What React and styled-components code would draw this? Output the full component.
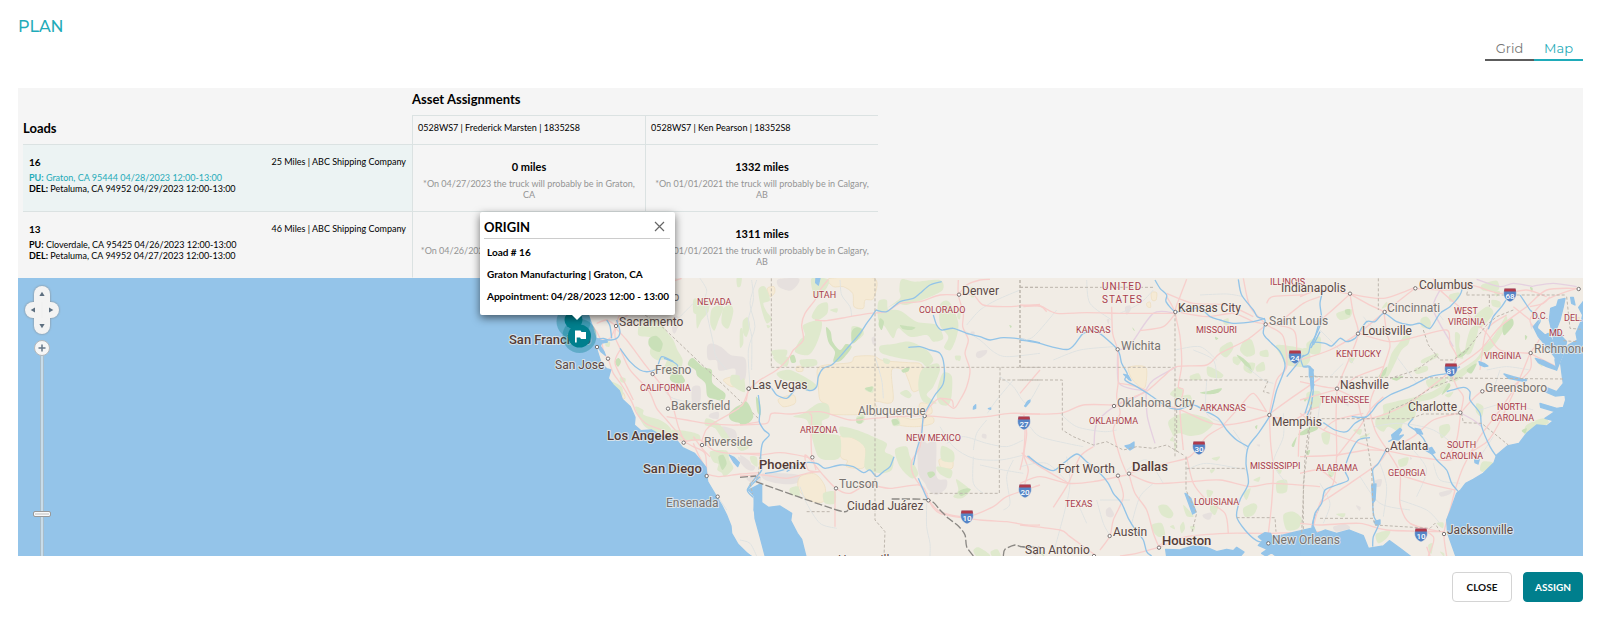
import React, { useState } from 'react';
import styled, { createGlobalStyle } from 'styled-components';

const color = {
  accent: '#1fabb9',
  teal: '#007f8d',
  panel: '#f5f5f5',
  line: '#dbe2e2',
  muted: '#949494',
  sea: '#94c4e9',
  land: '#f1ece5',
};

const GlobalStyle = createGlobalStyle`
  *, *::before, *::after { box-sizing: border-box; }
  body { margin: 0; background: #fff; color: #000; font-family: Lato, "Liberation Sans", sans-serif; }
  button { font-family: inherit; cursor: pointer; }
`;

const Page = styled.main`
  padding: 17px 17px 0 18px;
`;

const Title = styled.h1`
  margin: 0;
  font: 500 16px/20px Montserrat, Inter, sans-serif;
  color: ${color.accent};
`;

const Tabs = styled.div`
  display: flex;
  justify-content: flex-end;
`;

const Tab = styled.button`
  width: 49px;
  height: 24px;
  padding: 0;
  border: 0;
  border-bottom: 2px solid ${(p) => (p.$active ? color.accent : '#5c5c5c')};
  background: none;
  font: 400 13px/20px Montserrat, Inter, sans-serif;
  color: ${(p) => (p.$active ? color.accent : '#777')};
`;

const Panel = styled.section`
  margin-top: 27px;
  background: ${color.panel};
`;

const PlanTable = styled.table`
  margin-left: 5px;
  border-collapse: separate;
  border-spacing: 0;
  table-layout: fixed;
  width: 855px;
`;

const Col = styled.col`
  width: ${(p) => p.$width}px;
`;

const Heading = styled.th`
  height: ${(p) => (p.$tall ? 29 : 28)}px;
  padding: 0 0 ${(p) => (p.$tall ? 4 : 6)}px;
  text-align: left;
  font-size: 13px;
  line-height: 16px;
  font-weight: 700;
  border-bottom: ${(p) => (p.$ruled ? `1px solid ${color.line}` : '0')};
`;

const AssetHead = styled.th`
  padding: 0 5px 4px;
  border: 1px solid ${color.line};
  border-top: 0;
  border-right: 0;
  text-align: left;
  font-size: 9px;
  line-height: 12px;
  font-weight: 400;
`;

const LoadCell = styled.td`
  height: 67px;
  padding: 11px 6px 0;
  vertical-align: top;
  background: ${(p) => (p.$selected ? '#ecf3f3' : 'transparent')};
  border-bottom: 1px solid ${color.line};
  tr:last-child > & { height: 66px; border-bottom-color: transparent; }
`;

const LoadTop = styled.div`
  display: flex;
  justify-content: space-between;
  height: 16px;
  font-size: 9px;
  line-height: 12px;
`;

const LoadNumber = styled.strong`
  font-size: 10px;
`;

const Stop = styled.div`
  font-size: 9px;
  line-height: 11px;
  color: ${(p) => (p.$active ? color.accent : 'inherit')};
`;

const AssetCell = styled.td`
  padding: 15px 6px 0;
  vertical-align: top;
  text-align: center;
  border-left: 1px solid ${color.line};
  border-bottom: 1px solid ${color.line};
  tr:last-child > & { border-bottom-color: transparent; }
`;

const Miles = styled.div`
  margin-bottom: 4px;
  font-size: 11px;
  line-height: 14px;
  font-weight: 700;
`;

const Note = styled.div`
  font-size: 9px;
  line-height: 11px;
  color: ${color.muted};
`;

const MapArea = styled.div`
  position: relative;
  height: 278px;
  background: ${color.land};
`;

const MapSvg = styled.svg`
  display: block;
  width: 100%;
  height: 100%;
`;

const MapLabel = styled.text`
  font-family: Roboto, sans-serif;
  font-size: ${(p) => p.$size}px;
  font-weight: ${(p) => p.$weight};
  fill: ${(p) => p.$fill};
  stroke: #f6f1ea;
  stroke-width: 2px;
  stroke-opacity: 0.7;
  paint-order: stroke;
  stroke-linejoin: round;
  letter-spacing: ${(p) => (p.$tracked ? '1px' : 'normal')};
`;

const Controls = styled.div`
  position: absolute;
  top: 8px;
  left: 7px;
  width: 34px;
  height: 270px;
  display: flex;
  flex-direction: column;
  align-items: center;
`;

const PanPad = styled.div`
  display: grid;
  grid-template: repeat(3, 16px) / 9px 16px 9px;
  width: 34px;
  filter: drop-shadow(0 0 1px #888);
`;

const PanButton = styled.button`
  grid-area: ${(p) => p.$area};
  width: 16px;
  height: 16px;
  justify-self: ${(p) => p.$side || 'center'};
  padding: 0;
  border: 0;
  border-radius: ${(p) => p.$radius};
  background: #f3f3f3;
  display: grid;
  place-items: center;
`;

const PanHub = styled.span`
  grid-area: 2 / 2 / 3 / 3;
  background: #f1f1f1;
`;

const ZoomButton = styled.button`
  width: 16px;
  height: 16px;
  flex: none;
  margin-top: 6px;
  padding: 0;
  border: 1px solid #b5b8ba;
  border-radius: 50%;
  background: #f6f6f6;
  display: grid;
  place-items: center;
`;

const ZoomSlider = styled.input`
  appearance: none;
  writing-mode: vertical-lr;
  direction: rtl;
  flex: 1;
  width: 18px;
  min-height: 0;
  margin: 0;
  background: linear-gradient(90deg, transparent 7px, #a9bdca 7px, #a9bdca 8px, #c8dce9 8px, #c8dce9 10px, #a9bdca 10px, #a9bdca 11px, transparent 11px);
  &::-webkit-slider-thumb {
    appearance: none;
    width: 18px;
    height: 6px;
    border: 1px solid #999;
    border-radius: 2px;
    background: #dcdcdc;
    box-shadow: inset 0 0 0 1px #fafafa;
  }
`;

const Anchor = styled.div`
  position: absolute;
  left: 558px;
  top: 45px;
`;

const Popup = styled.div`
  position: absolute;
  z-index: 2;
  left: -96px;
  bottom: 8px;
  width: 195px;
  height: 103px;
  padding: 5px 5px 0 4px;
  border-radius: 2px;
  background: #fff;
  box-shadow: 0 3px 8px rgba(0, 0, 0, 0.55);
  &::after {
    content: '';
    position: absolute;
    left: 92px;
    top: 103px;
    border: 5px solid transparent;
    border-top-color: #fff;
    border-bottom: 0;
  }
`;

const PopupHead = styled.header`
  display: flex;
  justify-content: space-between;
  align-items: center;
  height: 22px;
  padding: 0 5px 2px 0;
  border-bottom: 1px solid #ccc;
`;

const PopupTitle = styled.h2`
  margin: 0;
  font-size: 13px;
  line-height: 16px;
`;

const IconButton = styled.button`
  width: 12px;
  height: 12px;
  padding: 0;
  border: 0;
  background: none;
  display: grid;
  place-items: center;
`;

const PopupBody = styled.div`
  display: grid;
  gap: 10px;
  padding: 7px 3px 0;
  font-size: 10px;
  line-height: 12px;
  font-weight: 700;
  white-space: nowrap;
`;

const Footer = styled.footer`
  display: flex;
  justify-content: flex-end;
  gap: 11px;
  padding: 16px 0;
`;

const ActionButton = styled.button`
  width: 60px;
  height: 30px;
  padding: 0;
  border: 1px solid ${(p) => (p.$primary ? color.teal : '#d4d4d4')};
  border-radius: 4px;
  background: ${(p) => (p.$primary ? color.teal : '#fff')};
  color: ${(p) => (p.$primary ? '#fff' : '#111')};
  font-size: 10px;
  font-weight: 700;
`;

/* ---------- Map drawing ----------
   The map is cut into four sheets. Sheet features use three units per
   pixel, counted from the sheet's own top left corner. */
const SHEETS = [460, 740, 1020, 1300];
const SHEET_TOP = 270;

const parse = (s) => s.trim().split(/\s+/).map((p) => p.split(',').map(Number));

const straight = (s) => `M${parse(s).join('L')}`;

function curve(s, closed) {
  const p = parse(s);
  const n = p.length;
  const at = (i) => (closed ? p[(i + n) % n] : p[Math.max(0, Math.min(n - 1, i))]);
  let d = `M${p[0]}`;
  for (let i = 0; i < (closed ? n : n - 1); i += 1) {
    const [a, b, c, e] = [at(i - 1), at(i), at(i + 1), at(i + 2)];
    d += `C${b[0] + (c[0] - a[0]) / 7},${b[1] + (c[1] - a[1]) / 7} ${c[0] - (e[0] - b[0]) / 7},${c[1] - (e[1] - b[1]) / 7} ${c}`;
  }
  return closed ? `${d}Z` : d;
}

const FEATURES = [
  {
    sea: [
      'M-1400 0H372L385 135L396 165L402 188L410 210L411 240L424 280L440 296L452 300L445 325L460 345L478 362L487 388L511 410L525 442L523 465L543 482L575 480L605 497L648 508L668 533L704 550L722 572L738 592L743 635L765 672L785 705L800 735L813 768L815 790L834 823L872 860H-1400z',
      'M865 660L885 680L882 720L893 760L905 800V640z',
      'M808 555L822 562L838 578L833 590L822 578z',
      'M410 205L425 212L440 210L442 216L425 219L421 228L432 245L436 256L424 246L414 232z',
    ],
    sand: ['790,330 820,320 850,325 845,345 815,350', '465,360 490,370 495,385 480,384'],
    gray: [
      '742,228 760,221 785,232 812,255 856,266 855,328 828,322 824,296 778,302 770,272 744,268',
      '697,352 720,350 722,386 713,407 696,395', '750,432 775,426 774,447 748,442',
      '785,470 824,480 830,505 808,508 792,495', '640,140 655,140 660,155 645,190 637,180', '477,362 492,368 494,386 481,380', '835,560 865,580 885,590 878,602 858,596 840,576',
      '860,625 900,618 900,635 875,638',
    ],
    green: [
      '545,150 595,148 620,185 640,210 652,240 668,270 662,310 670,340 650,345 632,318 610,300 620,270 590,270 570,250 575,205 535,195',
      '710,115 730,92 748,95 745,125 725,150 711,175', '755,118 780,105 790,115 776,150 763,182 751,160', '790,115 812,105 820,125 805,175 785,160',
      '830,25 845,22 842,48 832,50', '848,155 862,142 870,165 860,200 850,190', '450,335 485,350 487,378 465,375',
      '525,412 550,420 552,435 600,450 628,470 635,488 610,490 555,470', '635,480 690,485 718,495 715,512 650,508',
      '740,445 775,460 800,490 812,515 790,510 765,475 735,465', '750,545 800,542 808,570 820,595 795,620 785,608 772,600 775,582 760,575',
      '815,315 850,322 855,365 832,358 812,340', '480,322 496,325 495,338 482,335', '870,560 890,562 892,590 876,580',
      '437,215 450,216 448,230 437,228', '700,90 710,88 712,130 700,126', '832,510 862,520 865,535 845,543 830,530', '555,520 560,520 560,526 554,526',
    ],
    forest: [
      '690,268 700,265 728,290 755,300 758,340 795,370 790,392 765,388 742,378 736,340 712,318 706,300 684,285',
      '808,430 840,405 865,415 880,440 860,460 815,452', '568,205 590,198 608,220 600,245 580,240 566,225', '630,320 655,305 675,330 665,340 636,335',
      '465,275 475,264 483,275 474,290', '775,560 790,555 800,580 788,600 780,585',
    ],
    roads: [
      '385,150 410,185 425,210 450,205 468,168', '468,168 465,200 480,235 510,300 565,360 590,415 620,450 650,485 680,515',
      '425,212 432,250 445,268 460,310 485,345 515,395 530,430 560,462 605,480 665,512', '468,160 510,130 550,110 600,50 665,25',
      '468,175 500,210 530,250 560,290 600,340 630,380 655,470 672,512', '672,515 700,530 735,550 740,610', '672,515 720,510 760,540 810,550 900,550',
      '725,515 738,480 760,460 850,405 866,360 900,330', '620,440 680,450 740,460 830,465 900,455', '480,240 465,280 500,350 520,390',
      '468,160 480,130 475,110', '468,168 440,150 410,160', '740,612 780,620 840,612 900,608', '700,520 718,560 740,600', '700,500 730,540 750,560',
    ],
    minor: ['720,25 740,60 735,100 760,220 768,260 800,300', '890,30 870,100 885,170 865,240 870,350', '700,100 640,160', '600,340 630,380 680,395 740,400', '800,720 780,690 745,640'],
    rivers: [
      '405,208 430,205 445,210 470,205 480,185 470,150', '480,235 510,275 540,300 565,305 590,295 605,260 640,275', '655,300 652,285 640,276 612,265', '440,150 450,168 455,205', '900,620 880,640 862,660',
    ],
    borders: ['530,120 598,162 900,450'],
  },
  {
    sea: [
      'M42 682L85 712L120 708L155 730L152 752L172 790L185 808L198 860H76L60 800L45 745z', 'M0 836L36 860H0z',
      'M228 24L240 24L235 45L227 38z', 'M701 410L707 404L707 415L700 417z', 'M745 416L752 414L752 418z',
    ],
    sand: [
      '270,25 403,25 400,85 375,90 370,115 342,110 338,70 310,50 280,50', '238,290 330,278 345,260 400,258 430,272 505,278 545,285 550,345 520,365 505,330 490,300 455,300 460,385 445,400 405,395 405,430 260,432 262,405 240,390 235,340',
      '300,500 340,505 375,530 372,592 320,590 322,572 302,560', '180,620 225,612 255,650 250,695 205,690 175,655',
      '82,55 102,50 104,68 90,80', '170,290 188,290 187,304 170,303', '475,440 520,448 575,440 578,460 530,470 478,465', '540,400 570,405 575,430 540,435', '598,568 636,570 636,595 605,595', '115,388 160,375 165,400 130,410',
    ],
    gray: [
      '535,490 560,520 588,515 590,620 620,630 618,655 590,675 565,660 555,640 535,605', '115,28 175,25 172,45 150,62 116,50', '70,610 160,612 198,625 160,642 110,640 72,628',
      '712,245 740,240 738,252 718,265 708,258', '0,270 14,275 14,318 0,328', '0,555 30,575 35,600 12,585', '727,492 739,494 738,506 726,502', '693,185 703,185 703,193 693,192', '395,205 405,200 408,225 398,222',
    ],
    green: [
      '215,25 265,28 262,50 235,85 220,70', '55,60 75,50 90,90 70,100 80,125 95,145 80,160 65,120', '235,105 262,98 262,130 235,150 215,140',
      '190,165 240,150 245,175 228,225 205,255 165,245 180,210 195,195', '95,242 140,240 135,262 105,262', '100,260 145,262 140,290 115,280',
      '485,28 525,35 600,30 608,60 560,85 500,105 470,100 440,115 480,85 478,60', '415,95 440,90 445,120 480,130 520,180 475,175 460,205 435,170 415,150',
      '440,125 480,122 530,155 590,165 610,205 580,215 560,195 510,200 470,165', '420,228 460,222 510,215 560,240 580,270 560,290 540,275 480,265 425,250',
      '600,105 622,92 640,115 655,160 650,200 632,240 612,232 625,200 600,165', '608,310 635,318 635,375 625,405 600,402 590,370', '545,300 590,280 600,300 580,350 560,375 590,400 550,395 535,350',
      '160,440 190,430 235,400 265,405 268,440 245,455 262,490 300,500 300,560 270,570 235,560 215,500 200,450', '300,470 350,480 400,500 440,520 435,545 460,560 455,600 420,610 375,595 375,535 340,505 305,500',
      '465,540 500,530 510,560 535,610 515,625 480,590', '350,440 372,430 372,455 352,460', '455,450 475,445 480,465 460,468', '605,528 640,545 640,575 605,570', '590,590 635,600 630,625 600,612',
      '648,628 668,640 690,662 665,685 640,680 655,660', '180,270 225,268 230,285 190,292', '645,258 662,258 660,272 648,270', '375,355 400,350 398,368 378,362', '150,655 175,650 178,680 152,672', '335,170 365,175 370,195 340,215',
      '690,55 700,52 702,80 693,80', '700,842 715,832 745,850 748,860 712,860', '752,845 772,838 782,860 758,860', '0,180 8,178 10,220 0,232', '80,165 92,168 84,175', '250,670 285,665 285,700 255,700', '480,370 500,360 515,375 505,385', '110,310 150,300 210,330 230,350 200,362 170,335 130,330', '655,120 662,125 660,148 652,142', '270,120 292,115 290,128', '430,265 450,270 446,282 432,278',
    ],
    forest: [
      '258,172 272,185 278,215 300,240 318,222 335,232 305,270 280,275 285,245 265,215', '335,185 350,172 368,182 352,210 336,220', '420,145 432,155 425,180 416,165', '0,410 20,395 38,430 30,455 0,462',
      '150,260 162,255 168,275 155,278', '480,165 500,168 526,172 515,180 490,178', '350,445 370,440 365,460 350,458', '562,608 580,605 585,615 570,624', '455,450 470,448 478,460 462,466', '485,300 508,290 505,304 490,308', '655,665 680,655 692,660 665,678', '375,355 398,350 392,366', '48,380 60,400 62,435 52,425', '808,165 815,168 812,174',
    ],
    roads: [
      '265,28 240,60 225,90 195,130 185,165 190,210 160,240 145,265 110,300 60,330 28,355', '225,150 260,152 330,140 390,130 440,125 480,100 540,95 600,75 655,75',
      '655,30 655,75 670,130 668,170 685,210 675,250 690,300 680,350 660,390 640,415 600,385 570,410 555,437', '655,75 700,75 730,105 800,110 900,103', '655,75 680,45 720,30 750,28',
      '0,465 80,460 95,430 150,432 240,425 330,450 400,445 470,440 555,437 650,445 740,440 810,430 900,432', '0,550 60,555 120,548 195,560 217,570', '215,560 213,500 215,440 208,430',
      '217,575 245,610 288,655 330,670 380,645 450,655 540,645 565,685', '0,618 70,615 140,625 200,610 240,605', '555,437 545,470 540,530 515,575 520,615 550,660 565,690', '565,690 600,725 680,740 760,710 800,680 900,645',
      '565,690 600,730 720,750 800,755 860,765 900,765', '850,430 860,490 852,555 865,600 852,650', '285,658 285,720 285,770', '28,355 10,400 0,410', '217,575 195,555 205,600 240,605', '220,570 228,600', '600,385 635,390 640,412', '852,555 845,548',
    ],
    minor: [
      '35,30 40,90 25,150 35,200 35,300', '300,30 305,75 330,110 335,140', '680,165 720,120 770,90 840,60', '670,180 720,210 760,245 800,260 900,250', '405,260 425,330 430,385', '600,470 640,530 700,565 780,570 852,555',
      '620,520 670,500 740,520 800,530 850,510', '700,560 700,640 730,670', '740,450 710,490 700,540', '820,330 770,390 742,430', '820,570 800,620 810,700 790,720', '180,650 200,700 240,760 290,775', '0,810 30,820 50,858', '560,700 560,770 570,820 570,858', '780,320 820,350 860,400 900,340', '720,585 790,600 850,610',
    ],
    rivers: [
      '408,120 395,140 380,160 360,190 330,225 300,260 275,285 250,295 235,320 230,350 210,362 175,350 160,365 140,385 110,375 90,350 60,350', '605,35 570,45 540,70 520,85 480,95 440,125 408,120',
      '580,135 590,165 605,180 640,175 680,190 720,200 750,210 790,203 850,208 900,218', '505,232 540,230 570,240 600,250 612,285 610,340 585,375 565,410 550,440 545,490 530,540 520,585',
      '55,375 60,420 58,455 72,480 88,495 68,518 62,560 65,600 45,625 22,660 40,682', '140,605 185,580 230,580 255,595 300,585 340,590 370,608 390,600 410,620 430,605 450,590 462,560', '75,610 110,605 160,590', '862,558 880,575 900,585', '855,408 862,395 872,390', '535,625 550,660 562,688',
    ],
    borders: ['94,25 94,292', '94,292 460,292 900,292', '405,25 405,750 435,785 432,858', '840,30 840,292', '840,52 900,52', '780,292 780,330 900,330', '778,330 778,670 562,670', '30,640 38,672', '60,560 55,620 30,640', '200,725 275,725'],
    frontier: ['0,622 48,618', '48,635 290,720 325,720', '455,687 565,690 600,720 625,745 655,768 675,795 680,830 700,858', '790,858 795,838 825,825 845,830 900,832'],
  },
  {
    sea: [
      'M437 838L480 840L520 828L560 832L590 845L620 838L640 842L650 832L672 846L660 860H440z',
      'M735 788L752 790L755 800L790 795L830 785L872 775L880 790L900 800V860H770L755 848L738 858L725 850L742 838L715 826L728 812L715 800z',
      'M315 528L328 525L342 516L342 532L330 540z', 'M495 670L512 685L528 725L518 732L506 700z', 'M14 408L28 393L30 395L17 410z', 'M311 313L324 316L333 332L326 328z', 'M868 290L880 300L876 325L868 320z',
    ],
    sand: ['327,292 377,292 377,345 365,355 335,325', '394,68 410,68 408,90 396,90', '380,100 390,96 392,112 382,110', '490,400 515,395 510,408'],
    gray: ['315,112 330,106 332,120 320,134', '258,720 270,712 282,732 275,742 260,738', '548,735 575,728 570,748 555,746', '260,150 268,148 266,162', '710,524 720,524 718,530'],
    green: [
      '602,232 632,215 640,235 620,262 600,250', '672,212 695,210 705,250 680,260 660,240', '720,245 742,240 745,260 722,258', '640,260 665,265 655,285 640,278', '675,280 705,280 695,310 672,300', '562,290 590,300 610,315 600,325 565,318', '510,318 535,310 542,328 515,330', '708,290 730,275 735,300 712,305',
      '480,380 510,375 515,400 492,412 485,400', '445,455 490,430 550,440 580,460 550,490 510,498 475,490 450,510 470,520 465,545 460,500', '610,150 625,145 625,165 612,162', '542,412 560,402 560,415', '450,372 475,350 490,365 475,385',
      '415,708 440,705 460,730 450,745 425,735', '395,765 425,760 435,795 415,800 400,785', '490,705 515,730 520,740 500,738', '560,660 580,665 565,685', '575,700 595,705 585,735 570,720', '670,715 700,700 712,710 700,735 675,740', '670,670 692,655 680,690', '770,635 800,630 800,665 772,668', '790,735 820,725 845,745 835,775 800,780', '770,225 860,240 870,270 850,290 800,285 785,260', '860,220 900,200 900,250 870,250', '860,370 900,365 900,410 870,410', '770,600 785,600 780,612', '575,565 600,560 590,572', '700,630 720,620 716,635', '570,600 585,598 575,610',
      '480,770 490,755 495,775 485,790', '450,770 460,765 465,778', '510,770 525,768 520,785',
    ],
    forest: ['650,255 670,265 690,285 695,305 675,285', '540,368 570,362 605,355 595,368 565,373', '835,492 870,470 895,465 890,480 850,495', '815,525 830,500 822,530', '337,172 345,182 340,180', '585,200 595,205 588,210', '850,385 862,385 855,395', '60,850 70,845 72,858', '855,545 870,540 865,556', '705,470 712,465 710,478'],
    roads: [
      '0,105 60,108 110,130 200,128 300,130 385,130 465,130', '500,28 480,80 466,125 480,200 485,285 475,350 490,360 480,420 490,540', '466,125 560,140 640,130 700,155 737,162', '275,110 278,190 292,238 295,330 290,380 300,430 280,480 300,560 320,610',
      '0,432 120,430 190,405 282,405', '282,408 330,385 378,365 430,320 470,290 560,285 600,250 680,210 737,165', '282,408 400,405 470,415 560,455 612,465 680,455 748,435', '610,465 660,410 700,370 740,425', '612,468 560,500 520,550 500,565 440,580 325,610',
      '320,615 220,635 145,640 60,620 0,640', '325,610 400,640 510,635 600,630 690,650 760,640 900,650', '293,618 310,680 280,750 270,797 240,840', '327,612 345,670 380,720 400,790 417,832', '0,765 120,780 150,800 225,855', '145,640 60,590 12,555',
      '12,430 15,490 10,555 0,600', '100,712 145,640 180,560 220,530', '417,832 500,800 620,790 745,790 900,785', '500,560 520,640 560,690 615,730 625,790', '748,435 752,520 760,600 755,700 745,790', '748,430 770,330 800,290 790,200 750,170 737,160 820,180 830,240 825,290',
      '748,432 820,380 900,325', '748,438 820,450 870,420 900,410', '440,80 455,105 466,128', '360,182 430,170 466,130', '700,140 620,105 520,100 440,70', '0,370 60,300', '680,410 740,425', '417,832 350,850 300,858', '737,162 690,110 670,25', '775,160 850,100 900,80', '835,560 840,480 870,430', '10,110 60,108 80,125', '295,340 330,345 378,360', '417,828 440,812 500,803', '740,100 758,80 850,75',
    ],
    minor: [
      '200,30 210,100 275,150', '0,210 40,200 110,120', '280,230 180,240 100,270', '520,240 580,270 590,330', '465,240 540,230 590,270', '120,430 170,470 250,485 290,480', '140,560 150,640 135,720 100,850', '230,690 250,760 270,797', '330,690 240,690', '400,640 360,680 335,760', '560,330 560,430 612,460', '640,480 680,540', '300,130 360,100 400,60', '30,470 60,500 140,520 190,530', '180,715 200,760', '540,75 620,72 670,80', '680,290 730,330 760,340', '500,600 560,580 680,600', '790,430 790,500 760,580 800,640', '0,590 80,580 145,640', '320,600 380,570 430,640',
    ],
    violet: ['378,360 400,330 470,290', '466,130 400,130 330,225 293,240', '293,240 295,335 330,355 378,362', '378,362 382,440 405,520', '378,362 340,385 282,410 230,460 222,530'],
    rivers: [
      '0,210 50,218 145,238 190,190 230,185 292,238 305,280 322,312 315,330 350,350 390,375 440,410 475,418 520,405 560,425 595,445 620,480 650,510 685,530', '405,30 420,55 440,75 438,95 466,125 500,118 540,115 570,140 600,150 640,160 700,155 735,145',
      '655,28 665,75 700,120 712,140 735,150 730,190 750,215 780,245 795,290 770,360 760,400 748,440 715,490 685,530 678,580 685,640 660,690 650,740 675,780 710,812 745,820', '848,290 870,290 880,330 875,400 860,440',
      '25,558 60,585 100,602 130,580 170,552 200,575 240,610 265,640 280,670 305,700 325,745 350,785 370,810 380,845 395,858', '900,150 875,230 845,262 825,290 800,320', '897,715 880,750 875,778', '500,670 525,730', '900,185 880,225',
    ],
    borders: ['0,52 405,52', '0,30 0,292 460,292', '465,130 465,560', '0,330 127,330 127,480 160,500 220,525 260,515 310,540 350,530 400,535 440,525 490,555', '463,330 745,330 730,365 750,370', '498,560 498,660 530,730 515,790', '500,595 680,595', '650,743 765,743 768,785', '875,395 865,520 850,640 850,780', '880,318 900,320', '470,420 470,545'],
    frontier: ['0,830 15,832 50,855'],
  },
  {
    sea: [
      'M852 92L836 112L848 135L845 150L828 190L832 210L805 225L792 255L782 280L787 320L790 340L770 365L738 352L735 365L765 378L795 375L797 390L790 412L770 415L720 400L722 412L765 425L735 445L760 452L740 468L710 465L680 490L657 520L622 528L590 555L582 578L550 610L520 628L497 640L482 660L470 670L452 720L440 750L443 790L468 860H852z',
      'M0 796L30 793L40 768L50 790L75 780L110 790L148 780L190 797L205 835L250 828L268 812L300 835L333 860H0z',
      'M775 90L795 85L790 110L780 150L770 175L790 205L800 215L790 250L770 300L765 270L770 240L762 215L755 180L748 150L752 115L770 108z',
      'M700 170L715 152L712 175L735 195L745 190L760 225L775 245L765 262L740 230L715 200z', 'M706 265L730 272L765 290L770 300L740 290L715 278z', 'M612 312L640 320L680 330L675 335L625 325z', 'M537 275L552 280L564 288L553 290L540 285z',
      'M812 82L820 82L825 105L815 100z', 'M275 495L300 475L305 480L292 500L310 495L295 510L278 508z', 'M524 570L538 568L534 582L525 578z', 'M345 475L360 478L368 492L352 490z', 'M375 540L395 532L405 548L395 552z', 'M215 645L228 642L225 690L218 700z', 'M222 755L240 750L240 762L228 765z', 'M28 290L38 300L32 320L42 345L34 360z',
    ],
    sand: ['830,145 838,142 836,150'],
    gray: ['100,770 135,762 150,775 110,785', '418,668 455,660 450,672 425,680', '225,632 245,628 242,648 228,650', '130,395 145,395 145,410', '168,706 182,712 178,722', '330,560 336,565 332,570', '650,255 665,262 662,270', '790,222 800,220 798,230', '690,162 698,165 695,178'],
    green: [
      '362,148 380,140 392,155 388,175 365,170', '315,195 330,198 325,222 305,240 285,280 265,318 245,325 240,318 262,290 275,250 300,215', '345,295 380,288 382,302 350,312', '365,270 410,250 412,262 370,280', '250,405 285,395 330,385 395,365 440,340 450,350 400,385 350,400 345,440 310,460 300,485 265,470 250,485 228,470 228,445 250,430',
      '440,320 480,300 530,265 555,225 580,200 610,150 618,135 622,160 600,200 575,235 545,260 510,300 465,335', '520,145 560,110 580,130 540,175', '510,180 535,165 530,200 512,250 495,245', '465,190 480,195 478,230 490,265 470,255', '380,330 435,325 430,345 390,355', '435,375 460,365 448,382',
      '418,470 445,462 450,480 425,505', '530,400 550,410 545,440 528,425', '548,575 580,580 550,605 540,598', '295,570 325,562 320,585 300,590', '228,792 270,782 260,805 235,820', '10,235 35,235 20,255 5,250', '110,130 155,118 150,142 120,150', '65,490 90,488 85,522 70,518', '80,600 105,600 95,622', '108,732 135,730 130,742', '180,500 210,490 190,508', '145,268 165,262 155,280',
      '448,75 478,68 475,88 450,95', '545,45 590,32 595,60 550,62', '680,465 730,445 745,460 690,485 672,492', '580,60 600,65 590,80', '575,90 600,95 600,112 578,108', '245,115 260,95 262,108', '410,760 430,758 428,775', '160,480 185,478 180,495', '385,825 398,820 395,850 388,845', '420,845 432,850 432,860', '715,280 730,282 725,290',
    ],
    forest: ['610,165 635,145 640,165 615,195 608,185', '135,120 150,118 150,135 138,132', '465,262 510,230 490,258', '425,375 445,340 450,352', '500,300 530,280 515,310', '320,400 350,385 380,370 340,392', '665,482 680,475 676,490', '235,320 260,290 255,315', '690,52 698,55 696,68', '675,195 682,200 676,210', '275,325 310,318 290,332', '85,612 95,618 90,622'],
    roads: [
      '150,72 60,60 0,80', '150,72 160,130 175,190 150,260 125,320 111,355', '150,72 250,85 345,52', '345,55 300,90 252,127', '252,127 175,190 90,240 0,270', '252,127 260,190 270,230 240,320 210,400 225,480 262,540', '150,72 200,100 252,125', '345,55 450,60 510,45 600,70 680,60 740,80', '400,25 420,60 500,130 560,190 600,240 690,250',
      '175,190 270,215 350,200 440,180 450,220 470,260 455,300 470,350 490,380 482,428', '455,300 540,240 600,170 680,110 740,60 830,55', '111,358 0,390', '111,358 170,390 190,445 262,430 340,390 420,330 455,300', '111,355 108,450 110,555 100,640 60,700 35,790', '262,542 200,540 110,555 0,560', '262,542 235,580 150,640 60,700',
      '262,542 340,500 400,450 482,428', '262,542 300,610 300,700 330,760 420,785', '262,542 350,560 450,570 540,530 580,490 640,370 690,250', '300,615 380,640 465,660', '482,428 545,365 620,360 690,300 690,250', '482,428 470,510 440,570', '465,660 490,590 540,500 600,420 640,360', '465,660 450,720 432,790 440,858', '690,250 720,200 690,150 740,90 830,55', '690,250 770,290',
      '0,760 60,765 180,760 260,780 432,785', '0,335 111,355 170,320 250,290', '70,480 108,450 190,430', '262,545 180,520 70,480 0,430', '250,380 210,420 180,470 110,560', '380,830 390,858', '330,760 400,800 385,858', '690,110 730,100 750,80', '640,110 690,150', '620,135 560,180 540,300', '0,160 60,150 150,72', '0,610 60,600 110,640',
    ],
    minor: [
      '190,140 230,180 330,190', '60,180 110,230 160,280', '290,260 350,340', '60,400 50,470', '220,470 300,460 400,480 480,540', '300,690 380,720 420,760', '180,620 240,700 330,720', '340,540 380,600 350,680', '540,420 620,400 700,420', '580,500 540,560', '60,640 90,700 70,760', '560,300 620,290 690,300', '400,110 430,150', '130,280 90,320', '240,580 260,650 250,740', '400,580 420,630 480,640', '600,300 580,360',
    ],
    violet: ['530,28 600,50 640,40 700,50', '420,60 400,120 460,230', '480,428 520,450 545,470', '830,50 760,40 700,48'],
    rivers: [
      '0,262 25,250 35,218 75,220 95,228 120,205 140,215 165,205 175,190 200,155 225,155 252,130 290,155 330,165 360,160 390,175 420,130 450,110 480,75 488,50', '70,60 60,100 65,150 50,190 35,218', '0,262 10,290 28,292 40,320 30,380 15,430', '155,440 200,440 235,400 270,375 330,350 390,320 440,310 480,290', '565,178 580,140 605,110 618,90', '660,75 680,105 690,120', '440,365 490,352 510,365 510,390 540,430 545,470 570,530 590,560',
      '340,445 325,465 345,480 370,505 385,535 410,570 440,600 455,640 478,668', '210,503 175,510 150,550 135,600 145,630 110,645 75,660 65,700 45,730 38,770', '258,540 235,580 218,600 222,640 218,690 222,740 235,765 220,800 218,830', '70,458 105,480 140,485 165,460 200,440', '300,475 290,500 265,515', '690,120 720,150 710,170', '745,190 780,250',
    ],
    borders: ['235,25 235,120', '0,320 795,327', '65,446 330,446 370,432 485,432 490,458 545,460 625,525', '25,480 15,560 5,790', '190,446 215,600 220,740', '60,745 220,745 225,765 390,775 405,760 420,785', '500,75 580,75 660,75 800,75', '370,180 385,225 420,270 460,270 500,240 560,165 590,140 640,120', '265,445 270,420 320,400 400,350 480,322', '505,50 500,75', '568,75 568,110', '800,80 810,175 845,178', '410,255 350,300 270,325', '790,212 830,215'],
  },
];

const STYLES = {
  major: { $size: 13, $weight: 500, $fill: '#523b37' },
  city: { $size: 12, $weight: 400, $fill: '#594845' },
  town: { $size: 12, $weight: 400, $fill: '#777371' },
  state: { $size: 9, $weight: 400, $fill: '#a83c4c' },
  country: { $size: 10, $weight: 400, $fill: '#a83c4c', $tracked: true },
};

const LABELS = [
  [0, 'city', 'Sacramento', 478, 155], [0, 'major', 'San Francisco', 146, 208], [0, 'city', 'San Jose', 286, 284],
  [0, 'town', 'Fresno', 585, 300], [0, 'state', 'CALIFORNIA', 541, 353], [0, 'town', 'Bakersfield', 632, 406],
  [0, 'major', 'Los Angeles', 442, 497], [0, 'town', 'Riverside', 733, 514], [0, 'major', 'San Diego', 548, 596],
  [0, 'town', 'Ensenada', 617, 698], [0, 'state', 'NEVADA', 711, 96], [0, 'town', 'Reno', 577, 80],
  [1, 'state', 'UTAH', 220, 73], [1, 'city', 'Denver', 667, 62], [1, 'state', 'COLORADO', 537, 120],
  [1, 'city', 'Las Vegas', 35, 344], [1, 'town', 'Albuquerque', 353, 421], [1, 'state', 'ARIZONA', 179, 480],
  [1, 'state', 'NEW MEXICO', 499, 504], [1, 'major', 'Phoenix', 57, 583], [1, 'town', 'Tucson', 297, 642],
  [1, 'city', 'Ciudad Juárez', 322, 708], [1, 'city', 'Hermosillo', 294, 868],
  [2, 'country', 'UNITED', 247, 49], [2, 'country', 'STATES', 245, 87], [2, 'city', 'Kansas City', 475, 113],
  [2, 'town', 'Saint Louis', 747, 152], [2, 'state', 'ILLINOIS', 749, 36], [2, 'city', 'Indianapolis', 784, 52],
  [2, 'state', 'KANSAS', 167, 178], [2, 'state', 'MISSOURI', 528, 180], [2, 'town', 'Wichita', 302, 227],
  [2, 'town', 'Oklahoma City', 292, 397], [2, 'state', 'OKLAHOMA', 208, 452], [2, 'state', 'ARKANSAS', 541, 414],
  [2, 'city', 'Memphis', 757, 454], [2, 'state', 'MISSISSIPPI', 689, 588], [2, 'city', 'Fort Worth', 114, 597],
  [2, 'major', 'Dallas', 337, 590], [2, 'state', 'TEXAS', 136, 700], [2, 'state', 'LOUISIANA', 523, 695],
  [2, 'city', 'Austin', 278, 785], [2, 'major', 'Houston', 427, 811], [2, 'town', 'New Orleans', 755, 808],
  [2, 'city', 'San Antonio', 14, 838],
  [3, 'city', 'Columbus', 357, 43], [3, 'town', 'Cincinnati', 261, 114], [3, 'city', 'Louisville', 185, 181],
  [3, 'state', 'WEST', 463, 121], [3, 'state', 'VIRGINIA', 444, 154], [3, 'state', 'KENTUCKY', 107, 250],
  [3, 'state', 'VIRGINIA', 553, 256], [3, 'state', 'D.C.', 696, 136], [3, 'state', 'DEL.', 792, 142],
  [3, 'state', 'MD.', 747, 187], [3, 'town', 'Richmond', 701, 237], [3, 'city', 'Nashville', 121, 344],
  [3, 'state', 'TENNESSEE', 61, 390], [3, 'town', 'Greensboro', 556, 353], [3, 'city', 'Charlotte', 325, 409],
  [3, 'state', 'NORTH', 591, 409], [3, 'state', 'CAROLINA', 573, 442], [3, 'city', 'Atlanta', 271, 528],
  [3, 'state', 'SOUTH', 440, 525], [3, 'state', 'CAROLINA', 420, 558], [3, 'state', 'ALABAMA', 49, 592],
  [3, 'state', 'GEORGIA', 264, 609], [3, 'city', 'Jacksonville', 441, 780],
];

const DOTS = [
  '468,168 411,231 444,266 578,312 624,416 671,518 726,525 740,618 773,680 866,356',
  '657,74 26,356 554,438 217,562 288,655 565,691',
  '466,126 737,163 293,238 282,408 748,435 294,617 327,611 269,798 417,833 745,820 222,858',
  '150,71 346,55 254,126 174,191 692,249 111,356 547,364 481,428 262,540 432,792 836,57',
];

const SHIELDS = [
  [1, '27', 852, 460], [1, '20', 854, 663], [1, '10', 680, 740], [2, '24', 824, 262],
  [2, '30', 537, 535], [3, '68', 630, 76], [3, '81', 452, 299], [3, '10', 362, 796],
];

function Sheet({ f }) {
  const lines = (list = [], props) => list.map((s) => <path key={s} d={curve(s)} fill="none" strokeLinejoin="round" {...props} />);
  const areas = (list = [], props) => list.map((s) => <path key={s} d={curve(s, true)} {...props} />);
  return (
    <>
      {areas(f.gray, { fill: '#e6e0de' })}
      {areas(f.sand, { fill: '#f5ead5', stroke: '#eddcbc', strokeWidth: 2 })}
      {areas(f.green, { fill: '#dfe9cd' })}
      {areas(f.forest, { fill: '#c9e0b8' })}
      {lines(f.minor, { stroke: '#e0e3e2', strokeWidth: 3 })}
      {lines(f.violet, { stroke: '#e5d0e0', strokeWidth: 4 })}
      {lines(f.roads, { stroke: '#f7cfcc', strokeWidth: 4 })}
      {lines(f.rivers, { stroke: '#93c4e8', strokeWidth: 4 })}
      {f.sea.map((d) => <path key={d} d={d} fill={color.sea} stroke={color.sea} strokeWidth="4" strokeLinejoin="round" />)}
      {(f.borders || []).map((s) => <path key={s} d={straight(s)} fill="none" stroke="#bdb6ad" strokeWidth="3" strokeDasharray="9 6" />)}
      {lines(f.frontier, { stroke: '#8b8884', strokeWidth: 4, strokeDasharray: '24 7' })}
    </>
  );
}

function MapDrawing() {
  return (
    <MapSvg viewBox="18 278 1565 278" preserveAspectRatio="xMinYMin slice" role="img" aria-label="Map of the southern United States">
      {FEATURES.map((f, i) => (
        <g key={SHEETS[i]} transform={`translate(${SHEETS[i]} ${SHEET_TOP}) scale(0.33333)`}>
          <Sheet f={f} />
        </g>
      ))}
      {DOTS.map((row, i) => parse(row).map(([x, y]) => (
        <circle key={`${i}-${x}`} cx={SHEETS[i] + x / 3} cy={SHEET_TOP + y / 3} r="1.7" fill="#fff" stroke="#6d6765" strokeWidth="0.9" />
      )))}
      {SHIELDS.map(([s, n, x, y]) => (
        <g key={`${s}${n}`} transform={`translate(${Math.round(SHEETS[s] + x / 3)} ${Math.round(SHEET_TOP + y / 3)})`}>
          <path d="M-5.5-6.5H5.5L6.3-3C7 2 4 5.500 0 7C-4 5.500-7 2-6.300-3Z" fill="#5584c6" stroke="#f1ece5" strokeWidth="0.6" />
          <path d="M-5.500-6.500H5.500L6-3.500H-6Z" fill="#b03a4a" />
          <text x="0" y="4" textAnchor="middle" fontFamily="Roboto, sans-serif" fontSize="8" fontWeight="500" fill="#fff">{n}</text>
        </g>
      ))}
      {LABELS.map(([s, kind, text, x, y]) => (
        <MapLabel key={`${text}${x}`} {...STYLES[kind]} x={Math.round(SHEETS[s] + x / 3)} y={Math.round(SHEET_TOP + y / 3 + STYLES[kind].$size * 0.36)}>
          {text}
        </MapLabel>
      ))}
      <g>
        <circle cx="573.500" cy="321.500" r="17" fill={color.teal} opacity="0.35" />
        <circle cx="573.500" cy="320" r="9" fill={color.teal} />
        <circle cx="579.500" cy="336" r="17" fill={color.teal} opacity="0.35" />
        <circle cx="579.500" cy="336" r="11.500" fill={color.teal} />
        <path d="M575 330.500H580.500L581.500 332H586V339H581L580 337.500H576.700V342.500H575Z" fill="#fff" />
      </g>
    </MapSvg>
  );
}

const Arrow = ({ turn }) => (
  <svg width="6" height="6" viewBox="0 0 6 6" aria-hidden="true">
    <path d="M3 .7L5.600 5H.4Z" fill="#5d6f80" transform={`rotate(${turn} 3 3)`} />
  </svg>
);

const PAN = [
  { name: 'Pan up', area: '1 / 2 / 2 / 3', radius: '8px 8px 0 0', turn: 0 },
  { name: 'Pan left', area: '2 / 1 / 3 / 3', radius: '8px 0 0 8px', turn: 270, side: 'start' },
  { name: 'Pan right', area: '2 / 2 / 3 / 4', radius: '0 8px 8px 0', turn: 90, side: 'end' },
  { name: 'Pan down', area: '3 / 2 / 4 / 3', radius: '0 0 8px 8px', turn: 180 },
];

function MapControls() {
  return (
    <Controls>
      <PanPad>
        <PanHub />
        {PAN.map((p) => (
          <PanButton key={p.name} type="button" aria-label={p.name} $area={p.area} $radius={p.radius} $side={p.side}>
            <Arrow turn={p.turn} />
          </PanButton>
        ))}
      </PanPad>
      <ZoomButton type="button" aria-label="Zoom in">
        <svg width="8" height="8" viewBox="0 0 8 8" aria-hidden="true">
          <path d="M4 .5V7.500M.5 4H7.500" stroke="#667788" strokeWidth="1.500" />
        </svg>
      </ZoomButton>
      <ZoomSlider type="range" aria-label="Zoom level" min="0" max="100" defaultValue="20" />
    </Controls>
  );
}

const ASSETS = ['0528WS7 | Frederick Marsten | 18352S8', '0528WS7 | Ken Pearson | 18352S8'];

const LOADS = [
  {
    id: 16,
    info: '25 Miles | ABC Shipping Company',
    pu: 'Graton, CA 95444 04/28/2023 12:00-13:00',
    del: 'Petaluma, CA 94952 04/29/2023 12:00-13:00',
    options: [
      ['0 miles', '*On 04/27/2023 the truck will probably be in Graton, CA'],
      ['1332 miles', '*On 01/01/2021 the truck will probably be in Calgary, AB'],
    ],
  },
  {
    id: 13,
    info: '46 Miles | ABC Shipping Company',
    pu: 'Cloverdale, CA 95425 04/26/2023 12:00-13:00',
    del: 'Petaluma, CA 94952 04/27/2023 12:00-13:00',
    options: [
      ['36 miles', '*On 04/26/2023 the truck will probably be in Sonoma, CA'],
      ['1311 miles', '*On 01/01/2021 the truck will probably be in Calgary, AB'],
    ],
  },
];

export default function App() {
  const [view, setView] = useState('Map');
  const [open, setOpen] = useState(true);
  return (
    <Page>
      <GlobalStyle />
      <Title>PLAN</Title>
      <Tabs role="tablist">
        {['Grid', 'Map'].map((name) => (
          <Tab key={name} type="button" role="tab" aria-selected={view === name} $active={view === name} onClick={() => setView(name)}>
            {name}
          </Tab>
        ))}
      </Tabs>
      <Panel>
        <PlanTable>
          <colgroup>
            <Col $width={389} />
            <Col $width={233} />
            <Col $width={233} />
          </colgroup>
          <thead>
            <tr>
              <Heading as="td" />
              <Heading colSpan={2} $ruled>Asset Assignments</Heading>
            </tr>
            <tr>
              <Heading $ruled $tall>Loads</Heading>
              {ASSETS.map((a) => <AssetHead key={a}>{a}</AssetHead>)}
            </tr>
          </thead>
          <tbody>
            {LOADS.map((load) => (
              <tr key={load.id}>
                <LoadCell $selected={load.id === 16}>
                  <LoadTop>
                    <LoadNumber>{load.id}</LoadNumber>
                    <span>{load.info}</span>
                  </LoadTop>
                  <Stop $active={load.id === 16}><b>PU:</b> {load.pu}</Stop>
                  <Stop><b>DEL:</b> {load.del}</Stop>
                </LoadCell>
                {load.options.map(([miles, note]) => (
                  <AssetCell key={miles}>
                    <Miles>{miles}</Miles>
                    <Note>{note}</Note>
                  </AssetCell>
                ))}
              </tr>
            ))}
          </tbody>
        </PlanTable>
        <MapArea>
          <MapDrawing />
          <MapControls />
          {open && (
            <Anchor>
              <Popup role="dialog" aria-label="Origin">
                <PopupHead>
                  <PopupTitle>ORIGIN</PopupTitle>
                  <IconButton type="button" aria-label="Close popup" onClick={() => setOpen(false)}>
                    <svg width="11" height="11" viewBox="0 0 11 11" aria-hidden="true">
                      <path d="M1 1L10 10M10 1L1 10" stroke="#666" strokeWidth="1.200" />
                    </svg>
                  </IconButton>
                </PopupHead>
                <PopupBody>
                  <span>Load # 16</span>
                  <span>Graton Manufacturing | Graton, CA</span>
                  <span>Appointment: 04/28/2023 12:00 - 13:00</span>
                </PopupBody>
              </Popup>
            </Anchor>
          )}
        </MapArea>
      </Panel>
      <Footer>
        <ActionButton type="button">CLOSE</ActionButton>
        <ActionButton type="button" $primary>ASSIGN</ActionButton>
      </Footer>
    </Page>
  );
}
